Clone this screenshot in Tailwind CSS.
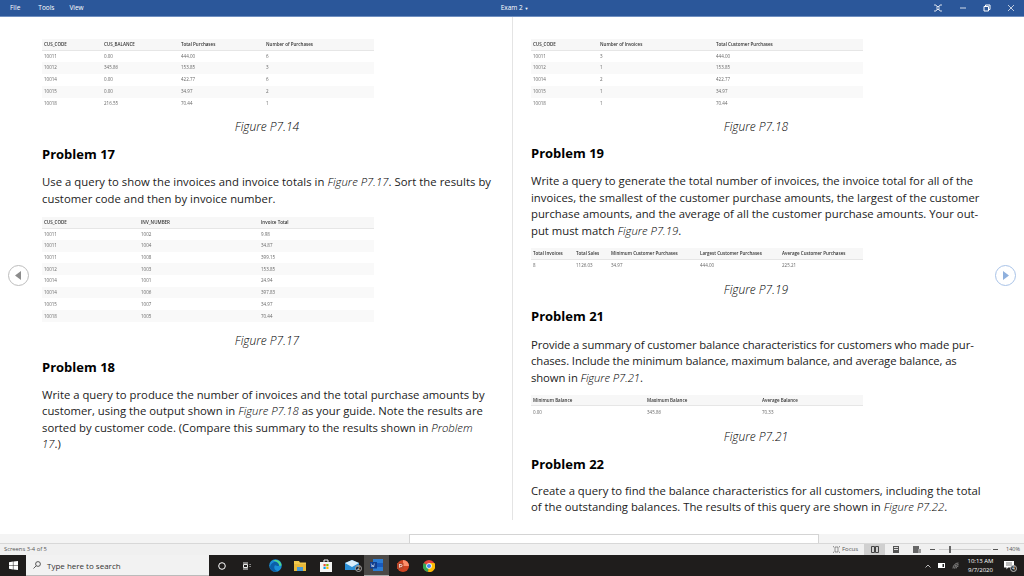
<!DOCTYPE html>
<html lang="en">
<head>
    <meta charset="UTF-8">
    <title>Exam 2 - Word</title>
    <script src="https://cdn.jsdelivr.net/npm/@tailwindcss/browser@4"></script>
</head>
<body class="w-[1024px] h-[576px] overflow-hidden bg-white flex flex-col relative font-['Open_Sans',sans-serif] text-[#222]">

<!-- Title bar -->
<div class="h-[17px] shrink-0 bg-[#2b579a] border-b border-[#6f8fc0] flex items-center text-white text-[6.5px] font-medium relative">
    <span class="ml-[10px]">File</span>
    <span class="ml-[18px]">Tools</span>
    <span class="ml-[15px]">View</span>
    <span class="ml-[417px] font-normal">Exam 2 <span class="text-[4px]">▼</span></span>
    <div class="ml-auto flex items-center">
        <svg class="w-[8px] h-[8px] mr-[17px]" viewBox="0 0 8 8" fill="none" stroke="#fff" stroke-width=".8"><path d="M0 1h2l1 1.500h2L6 1h2M0 7h2l1-1.500h2L6 7h2M3 2.500v3M5 2.500v3"/></svg>
        <svg class="w-[8px] h-[8px] mr-[16px]" viewBox="0 0 8 8" stroke="#fff" stroke-width=".8"><path d="M1 4h6"/></svg>
        <svg class="w-[8px] h-[8px] mr-[16px]" viewBox="0 0 8 8" fill="none" stroke="#fff"><path d="M1 2.500h4.500v4.500H1zM2.500 2.500V1H7v4.500H5.500"/></svg>
        <svg class="w-[8px] h-[8px] mr-[9px]" viewBox="0 0 8 8" stroke="#fff" stroke-width=".7"><path d="M1 1l6 6M7 1L1 7"/></svg>
    </div>
</div>

<!-- Pages -->
<div class="h-[517px] shrink-0 flex items-start">
    <!-- Left page -->
    <div class="w-[513px] h-[503px] shrink-0 border-r border-[#e4e4e4] pl-[42px] pt-[22px]">
        <table class="w-[332px] blur-[0.3px] table-fixed text-[4.5px] text-[#666] [&_th]:h-[11px] [&_th]:bg-[#f7f7f7] [&_th]:border-b [&_th]:border-[#e6e6e6] [&_th]:pl-[2px] [&_th]:text-left [&_th]:font-semibold [&_th]:text-[#333] [&_td]:h-[11.9px] [&_td]:pl-[2px] [&_tr:nth-child(even)]:bg-[#f9f9f9]">
            <thead><tr><th class="w-[60px]">CUS_CODE</th><th class="w-[77px]">CUS_BALANCE</th><th class="w-[85px]">Total Purchases</th><th>Number of Purchases</th></tr></thead>
            <tbody>
                <tr><td>10011</td><td>0.00</td><td>444.00</td><td>6</td></tr>
                <tr><td>10012</td><td>345.86</td><td>153.85</td><td>3</td></tr>
                <tr><td>10014</td><td>0.00</td><td>422.77</td><td>6</td></tr>
                <tr><td>10015</td><td>0.00</td><td>34.97</td><td>2</td></tr>
                <tr><td>10018</td><td>216.55</td><td>70.44</td><td>1</td></tr>
            </tbody>
        </table>
        <p class="w-[450px] mt-[9px] text-center italic font-light text-[12px] leading-[18px] text-black">Figure P7.14</p>
        <h2 class="mt-[9px] font-bold text-[13px] leading-[18px] text-black">Problem 17</h2>
        <p class="mt-[11px] whitespace-nowrap text-[11.3px] leading-[16.4px] tracking-[0.04px]">Use a query to show the invoices and invoice totals in <i class="font-light text-black">Figure P7.17</i>. Sort the results by<br>customer code and then by invoice number.</p>
        <table class="w-[332px] blur-[0.3px] mt-[10px] table-fixed text-[4.5px] text-[#666] [&_th]:h-[11px] [&_th]:bg-[#f7f7f7] [&_th]:border-b [&_th]:border-[#e6e6e6] [&_th]:pl-[2px] [&_th]:text-left [&_th]:font-semibold [&_th]:text-[#333] [&_td]:h-[11.7px] [&_td]:pl-[2px] [&_tr:nth-child(even)]:bg-[#f9f9f9]">
            <thead><tr><th class="w-[97px]">CUS_CODE</th><th class="w-[120px]">INV_NUMBER</th><th>Invoice Total</th></tr></thead>
            <tbody>
                <tr><td>10011</td><td>1002</td><td>9.98</td></tr>
                <tr><td>10011</td><td>1004</td><td>34.87</td></tr>
                <tr><td>10011</td><td>1008</td><td>399.15</td></tr>
                <tr><td>10012</td><td>1003</td><td>153.85</td></tr>
                <tr><td>10014</td><td>1001</td><td>24.94</td></tr>
                <tr><td>10014</td><td>1006</td><td>397.83</td></tr>
                <tr><td>10015</td><td>1007</td><td>34.97</td></tr>
                <tr><td>10018</td><td>1005</td><td>70.44</td></tr>
            </tbody>
        </table>
        <p class="w-[450px] mt-[10px] text-center italic font-light text-[12px] leading-[18px] text-black">Figure P7.17</p>
        <h2 class="mt-[8px] font-bold text-[13px] leading-[18px] text-black">Problem 18</h2>
        <p class="mt-[11px] whitespace-nowrap text-[11.3px] leading-[16.4px]">Write a query to produce the number of invoices and the total purchase amounts by<br>customer, using the output shown in <i class="font-light text-black">Figure P7.18</i> as your guide. Note the results are<br>sorted by customer code. (Compare this summary to the results shown in <i class="font-light text-black">Problem<br>17</i>.)</p>
    </div>

    <!-- Right page -->
    <div class="flex-1 pl-[18px] pt-[22px]">
        <table class="w-[332px] blur-[0.3px] table-fixed text-[4.5px] text-[#666] [&_th]:h-[11px] [&_th]:bg-[#f7f7f7] [&_th]:border-b [&_th]:border-[#e6e6e6] [&_th]:pl-[2px] [&_th]:text-left [&_th]:font-semibold [&_th]:text-[#333] [&_td]:h-[11.9px] [&_td]:pl-[2px] [&_tr:nth-child(even)]:bg-[#f9f9f9]">
            <thead><tr><th class="w-[67px]">CUS_CODE</th><th class="w-[116px]">Number of Invoices</th><th>Total Customer Purchases</th></tr></thead>
            <tbody>
                <tr><td>10011</td><td>3</td><td>444.00</td></tr>
                <tr><td>10012</td><td>1</td><td>153.85</td></tr>
                <tr><td>10014</td><td>2</td><td>422.77</td></tr>
                <tr><td>10015</td><td>1</td><td>34.97</td></tr>
                <tr><td>10018</td><td>1</td><td>70.44</td></tr>
            </tbody>
        </table>
        <p class="w-[450px] mt-[9px] text-center italic font-light text-[12px] leading-[18px] text-black">Figure P7.18</p>
        <h2 class="mt-[8px] font-bold text-[13px] leading-[18px] text-black">Problem 19</h2>
        <p class="mt-[11px] whitespace-nowrap text-[11.3px] leading-[16.4px]">Write a query to generate the total number of invoices, the invoice total for all of the<br>invoices, the smallest of the customer purchase amounts, the largest of the customer<br>purchase amounts, and the average of all the customer purchase amounts. Your out-<br>put must match <i class="font-light text-black">Figure P7.19</i>.</p>
        <table class="w-[332px] blur-[0.3px] mt-[9px] table-fixed text-[4.5px] text-[#666] [&_th]:h-[11px] [&_th]:bg-[#f7f7f7] [&_th]:border-b [&_th]:border-[#e6e6e6] [&_th]:pl-[2px] [&_th]:text-left [&_th]:font-semibold [&_th]:text-[#333] [&_td]:h-[11.7px] [&_td]:pl-[2px]">
            <thead><tr><th class="w-[43px]">Total Invoices</th><th class="w-[35px]">Total Sales</th><th class="w-[89px]">Minimum Customer Purchases</th><th class="w-[82px]">Largest Customer Purchases</th><th>Average Customer Purchases</th></tr></thead>
            <tbody><tr><td>8</td><td>1126.03</td><td>34.97</td><td>444.00</td><td>225.21</td></tr></tbody>
        </table>
        <p class="w-[450px] mt-[10px] text-center italic font-light text-[12px] leading-[18px] text-black">Figure P7.19</p>
        <h2 class="mt-[8px] font-bold text-[13px] leading-[18px] text-black">Problem 21</h2>
        <p class="mt-[12px] whitespace-nowrap text-[11.3px] leading-[16.4px] tracking-[-0.1px]">Provide a summary of customer balance characteristics for customers who made pur-<br>chases. Include the minimum balance, maximum balance, and average balance, as<br>shown in <i class="font-light text-black">Figure P7.21</i>.</p>
        <table class="w-[332px] blur-[0.3px] mt-[9px] table-fixed text-[4.5px] text-[#666] [&_th]:h-[11px] [&_th]:bg-[#f7f7f7] [&_th]:border-b [&_th]:border-[#e6e6e6] [&_th]:pl-[2px] [&_th]:text-left [&_th]:font-semibold [&_th]:text-[#333] [&_td]:h-[11.7px] [&_td]:pl-[2px]">
            <thead><tr><th class="w-[114px]">Minimum Balance</th><th class="w-[115px]">Maximum Balance</th><th>Average Balance</th></tr></thead>
            <tbody><tr><td>0.00</td><td>345.86</td><td>70.33</td></tr></tbody>
        </table>
        <p class="w-[450px] mt-[10px] text-center italic font-light text-[12px] leading-[18px] text-black">Figure P7.21</p>
        <h2 class="mt-[9px] font-bold text-[13px] leading-[18px] text-black">Problem 22</h2>
        <p class="mt-[10px] whitespace-nowrap text-[11.3px] leading-[16.4px]">Create a query to find the balance characteristics for all customers, including the total<br>of the outstanding balances. The results of this query are shown in <i class="font-light text-black">Figure P7.22</i>.</p>
    </div>
</div>

<!-- Page scroller -->
<div class="h-[10px] shrink-0 bg-[#f4f4f4] border-b border-[#d8d8d8] pl-[409px]">
    <div class="w-[410px] h-[9px] bg-white border-t border-x border-[#d4d4d4]"></div>
</div>

<!-- Status bar -->
<div class="h-[11px] shrink-0 bg-[#f0f0f0] flex items-center text-[6px] text-[#555]">
    <span class="ml-[4px] text-[5.8px]">Screens 3-4 of 5</span>
    <div class="ml-auto flex items-center h-full">
        <svg class="w-[7px] h-[7px] mr-[2px]" viewBox="0 0 7 7" fill="none" stroke="#555" stroke-width=".6"><path d="M2 1h3v5H2zM0 1.500V.300h1M7 1.500V.300H6M0 5.500v1.200h1M7 5.500v1.200H6"/></svg>
        <span class="w-[22px]">Focus</span>
        <div class="w-[21px] h-full bg-[#d0d0d0] flex items-center justify-center">
            <svg class="w-[8px] h-[7px]" viewBox="0 0 8 7" fill="none" stroke="#444"><path d="M.5.500h3v6h-3zM4.500.500h3v6h-3z"/></svg>
        </div>
        <svg class="w-[6px] h-[7px] ml-[8px]" viewBox="0 0 6 7" fill="#555"><path d="M0 0h6v7H0z"/><path d="M1 1h4v1H1zM1 3h4v1H1z" fill="#ddd"/></svg>
        <svg class="w-[8px] h-[7px] ml-[14px]" viewBox="0 0 8 7" fill="#666"><path d="M0 0h6v7H0z"/><path d="M5 3h3v4H5z" fill="#999"/></svg>
        <div class="ml-[9px] w-[5px] h-px bg-[#555]"></div>
        <div class="ml-[4px] w-[52px] h-px bg-[#cfcfcf] relative">
            <div class="absolute left-[10px] -top-[3px] w-[2px] h-[7px] bg-[#666]"></div>
        </div>
        <div class="ml-[2px] w-[5px] h-px bg-[#555]"></div>
        <span class="ml-[8px] mr-[2px] w-[16px] text-[5.5px]">140%</span>
    </div>
</div>

<!-- Taskbar -->
<div class="h-[21px] shrink-0 bg-[#1f1d1c] flex items-center text-white">
    <div class="w-[26px] flex justify-center">
        <svg class="w-[9px] h-[9px]" viewBox="0 0 9 9" fill="#fff"><path d="M0 1.200l3.900-.6v3.600H0zM4.400.500L9 0v4.200H4.400zM0 4.700h3.900v3.700L0 7.800zM4.400 4.700H9V9l-4.600-.6z"/></svg>
    </div>
    <div class="w-[183px] h-full bg-[#f2f2f2] border-b border-[#bbb] flex items-center text-[#333] text-[8px]">
        <svg class="w-[8px] h-[8px] ml-[7px]" viewBox="0 0 8 8" fill="none" stroke="#333" stroke-width=".8"><circle cx="5" cy="3" r="2.400"/><path d="M3.200 4.800L.5 7.500"/></svg>
        <span class="ml-[6px] pt-[1px]">Type here to search</span>
    </div>
    <svg class="w-[8px] h-[8px] ml-[9px]" viewBox="0 0 8 8" fill="none" stroke="#fff"><circle cx="4" cy="4" r="3.300"/></svg>
    <svg class="w-[9px] h-[8px] ml-[16px]" viewBox="0 0 9 8" fill="none" stroke="#fff" stroke-width=".9"><path d="M1 1h5M1 7h5M1.500 2.500h4v3h-4z"/><path d="M7.500 2.500h1.200M7.500 4.500h1.200" stroke="#ccc"/></svg>
    <svg class="w-[13px] h-[13px] ml-[18px]" viewBox="0 0 13 13"><circle cx="6.500" cy="6.500" r="6.300" fill="#1a8ed8"/><path d="M1 9c0-4 3-6.500 6-6 2.500.4 3.500 2 3.200 3.500-1 .8-3.500.7-4-.4C4.500 7.500 5 11 8 12c-3 1.200-6-.5-7-3z" fill="#0b5fa8"/><path d="M4 1.500c3-1.500 8 .5 8.500 4.500-.7 1.200-2 1.200-2.300.5C10 4 7.500 2 4 1.500z" fill="#4fd88a"/></svg>
    <svg class="w-[12px] h-[11px] ml-[12px]" viewBox="0 0 12 11"><path d="M0 1h5l1 1.500h6V11H0z" fill="#f2c94c"/><path d="M0 4h12v7H0z" fill="#e9b93a"/><path d="M3 7h6v4H3z" fill="#4a9bd4"/></svg>
    <svg class="w-[12px] h-[13px] ml-[14px]" viewBox="0 0 12 13"><path d="M0 3h12v10H0z" fill="#f4f4f4"/><path d="M4 3V1h4v2" fill="none" stroke="#f4f4f4"/><path d="M3.500 5h2.200v2.200H3.500z" fill="#e8523a"/><path d="M6.300 5h2.200v2.200H6.300z" fill="#7fba00"/><path d="M3.500 7.800h2.200V10H3.500z" fill="#00a4ef"/><path d="M6.300 7.800h2.200V10H6.300z" fill="#ffb900"/></svg>
    <div class="relative ml-[13px] w-[14px] h-[13px]">
        <svg class="w-[14px] h-[10px] mt-[1px]" viewBox="0 0 14 10"><path d="M0 3l7-3 7 3v7H0z" fill="#2a8fd6"/><path d="M0 3l7 4 7-4-7-3z" fill="#d8eefb"/></svg>
        <span class="absolute -right-[3px] bottom-0 w-[7px] h-[7px] rounded-full bg-[#222] border border-[#aaa] text-[5px] leading-[5px] text-center">2</span>
    </div>
    <div class="ml-[5px] w-[25px] h-full bg-[#4b4947] border-b border-[#aaa] flex items-center justify-center">
        <svg class="w-[13px] h-[12px]" viewBox="0 0 13 12"><path d="M3 0h10v12H3z" fill="#2b7cd3"/><path d="M3 4h10v4H3z" fill="#185abd"/><path d="M0 3h7v6.500H0z" fill="#103f91"/><path d="M1.200 4.500l.8 3.500.8-2 .8 2 .8-3.500" fill="none" stroke="#fff" stroke-width=".5"/></svg>
    </div>
    <svg class="w-[12px] h-[12px] ml-[8px]" viewBox="0 0 12 12"><circle cx="6" cy="6" r="6" fill="#d04423"/><path d="M6 0a6 6 0 016 6H6z" fill="#ff8f6b"/><path d="M0 3h6.500v6H0z" fill="#b7472a"/><path d="M2 4.500h2a1 1 0 010 2.200H2.800M2.500 4.500v3.200" fill="none" stroke="#fff" stroke-width=".7"/></svg>
    <svg class="w-[12px] h-[12px] ml-[14px]" viewBox="0 0 12 12"><circle cx="6" cy="6" r="6" fill="#e8453c"/><path d="M6 6L.8 3a6 6 0 00-.2 6 6 6 0 004.600 3z" fill="#34a853"/><path d="M6 3h5.400a6 6 0 01-6.200 9z" fill="#fbbc05"/><circle cx="6" cy="6" r="2.800" fill="#fff"/><circle cx="6" cy="6" r="2.100" fill="#4285f4"/></svg>

    <div class="ml-auto flex items-center">
        <svg class="w-[6px] h-[4px]" viewBox="0 0 6 4" fill="none" stroke="#fff" stroke-width=".7"><path d="M.5 3.500L3 1l2.500 2.500"/></svg>
        <svg class="w-[8px] h-[5px] ml-[7px]" viewBox="0 0 8 5"><path d="M0 0h7v5H0z" fill="#fff"/><path d="M4.500 1h1.500v3H4.500z" fill="#222"/></svg>
        <svg class="w-[7px] h-[7px] ml-[6px]" viewBox="0 0 7 7" fill="none" stroke="#ccc" stroke-width=".6"><path d="M1 6.500A5.500 5.500 0 016.500 1M2.500 6.500a4 4 0 014-4M4 6.500A2.500 2.500 0 016.500 4"/></svg>
        <div class="w-[33px] ml-[5px] text-center text-[6px] leading-[9px]">10:13 AM<br>9/7/2020</div>
        <div class="relative ml-[7px] mr-[10px] w-[10px] h-[10px]">
            <svg class="w-[10px] h-[9px]" viewBox="0 0 10 9" fill="#fff"><path d="M0 0h10v6.500H4L2.500 8.500v-2H0z"/><path d="M2 2h6M2 4h6" stroke="#222" stroke-width=".6"/></svg>
            <span class="absolute -right-[3px] -bottom-[1px] w-[7px] h-[7px] rounded-full bg-[#222] border border-[#bbb] text-[5px] leading-[5px] text-center">4</span>
        </div>
    </div>
</div>

<!-- Page turn buttons -->
<div class="absolute left-[8px] top-[265px] w-[21px] h-[21px] rounded-full border border-[#bdbdbd] bg-white flex items-center justify-center">
    <svg class="w-[7px] h-[9px]" viewBox="0 0 7 9" fill="#8c8c8c"><path d="M6 0v9L0 4.500z"/></svg>
</div>
<div class="absolute left-[995px] top-[265px] w-[21px] h-[21px] rounded-full border border-[#a9c3e8] bg-white flex items-center justify-center">
    <svg class="w-[7px] h-[9px]" viewBox="0 0 7 9" fill="#8fb0dd"><path d="M1 0v9l6-4.500z"/></svg>
</div>

</body>
</html>
